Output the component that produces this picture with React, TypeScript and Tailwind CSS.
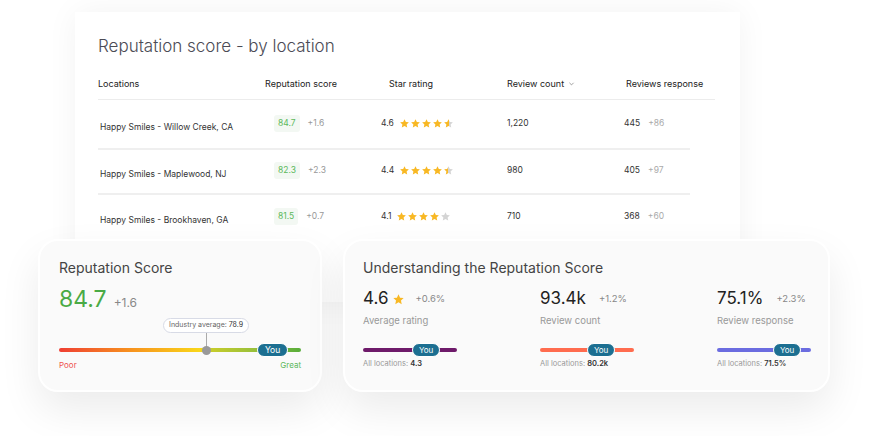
import React from 'react';

const font = { fontFamily: 'Inter, "Noto Sans", sans-serif' };

type Row = { name: string; score: string; delta: string; rating: string; fill: number; count: string; resp: string; respDelta: string };

const rows: Row[] = [
  { name: 'Happy Smiles - Willow Creek, CA', score: '84.7', delta: '+1.6', rating: '4.6', fill: 4.6, count: '1,220', resp: '445', respDelta: '+86' },
  { name: 'Happy Smiles - Maplewood, NJ', score: '82.3', delta: '+2.3', rating: '4.4', fill: 4.5, count: '980', resp: '405', respDelta: '+97' },
  { name: 'Happy Smiles - Brookhaven, GA', score: '81.5', delta: '+0.7', rating: '4.1', fill: 4.0, count: '710', resp: '368', respDelta: '+60' },
];

const STAR = 'M12 2.5l2.9 6.1 6.6.8-4.9 4.6 1.3 6.6L12 17.3l-5.9 3.3 1.3-6.6-4.9-4.6 6.6-.8z';

const Star = ({ part, id }: { part: number; id: string }) => (
  <svg viewBox="0 0 24 24" className="w-[11px] h-[11px]">
    <defs>
      <linearGradient id={id}>
        <stop offset={`${part * 100}%`} stopColor="#f8b824" />
        <stop offset={`${part * 100}%`} stopColor="#d4d4d4" />
      </linearGradient>
    </defs>
    <path d={STAR} fill={`url(#${id})`} />
  </svg>
);

const Stars = ({ value, k }: { value: number; k: number }) => (
  <div className="flex items-center">
    {[0, 1, 2, 3, 4].map((i) => (
      <Star key={i} id={`s${k}-${i}`} part={Math.max(0, Math.min(1, value - i))} />
    ))}
  </div>
);

const YouPill = () => (
  <span className="h-[14px] px-[6px] rounded-full bg-[#1c6f91] border border-white text-white text-[8px] leading-none flex items-center">You</span>
);

const Metric = ({ value, star, delta, label, color, pos, all, last }: { value: string; star?: boolean; delta: string; label: string; color: string; pos: number; all: string; last?: boolean }) => (
  <div className={last ? 'flex-1' : 'w-[177px] shrink-0'}>
    <div className="flex items-center h-[20px]">
      <span className="text-[17px] text-[#222]">{value}</span>
      {star && (
        <svg viewBox="0 0 24 24" className="w-[13px] h-[13px] ml-[4px]"><path d={STAR} fill="#f8b824" /></svg>
      )}
      <span className={`text-[9.5px] text-[#888] ${star ? 'ml-[10px]' : 'ml-[13px]'}`}>{delta}</span>
    </div>
    <div className="text-[9.5px] text-[#999] mt-[5px]">{label}</div>
    <div className="relative w-[94px] h-[14px] mt-[15px] flex items-center">
      <div className="w-full h-[4px] rounded-full" style={{ background: color }} />
      <div className="absolute top-0" style={{ left: pos }}><YouPill /></div>
    </div>
    <div className="text-[7.5px] text-[#999] mt-[1px]">All locations: <span className="text-[#333] font-semibold">{all}</span></div>
  </div>
);

export default function App() {
  return (
    <div className="w-[873px] h-[436px] bg-white overflow-hidden relative" style={font}>
      {/* Table card */}
      <div className="ml-[75px] mt-[12px] w-[665px] h-[290px] bg-white shadow-[0_0_30px_rgba(0,0,0,0.05)] pl-[23px] pr-[25px] pt-[22px]">
        <h1 className="text-[17px] font-light text-[#4b4b55] leading-[24px]">Reputation score - by location</h1>
        <div className="flex items-center h-[30px] mt-[12px] border-b border-[#ececec] text-[9px] text-[#222] pb-[2px]">
          <div className="w-[167px]">Locations</div>
          <div className="w-[124px]">Reputation score</div>
          <div className="w-[118px]">Star rating</div>
          <div className="w-[119px] flex items-center gap-[4px]">Review count
            <svg viewBox="0 0 10 10" className="w-[7px] h-[7px]"><path d="M2 4l3 3 3-3" stroke="#777" fill="none" strokeWidth="1" /></svg>
          </div>
          <div>Reviews response</div>
        </div>
        <div className="w-[592px]">
          {rows.map((r, i) => (
            <div key={r.name} className={`flex items-center text-[8.5px] text-[#333] ${i === 0 ? 'h-[50px]' : 'h-[45px]'} ${i < 2 ? 'border-b-2 border-[#efefef]' : ''}`}>
              <div className="w-[176px] pl-[2px] pt-[6px]">{r.name}</div>
              <div className="w-[107px] flex items-center gap-[8px] pb-[2px]">
                <span className="bg-[#f3f8f3] text-[#5cb85c] rounded-[3px] px-[4px] h-[17px] flex items-center">{r.score}</span>
                <span className="text-[#999]">{r.delta}</span>
              </div>
              <div className="w-[126px] flex items-center gap-[5px] pb-[2px]">
                <span>{r.rating}</span>
                <Stars value={r.fill} k={i} />
              </div>
              <div className="w-[117px] pb-[2px]">{r.count}</div>
              <div className="flex gap-[8px] pb-[2px]">
                <span>{r.resp}</span>
                <span className="text-[#aaa]">{r.respDelta}</span>
              </div>
            </div>
          ))}
        </div>
      </div>

      {/* Bottom cards */}
      <div className="flex gap-[21px] ml-[38px] -mt-[63px] relative">
        <div className="w-[284px] h-[153px] rounded-[20px] bg-[#fafafa] border-2 border-white shadow-[0_18px_40px_rgba(0,0,0,0.08)] px-[19px] pt-[17px]">
          <div className="text-[14px] text-[#444] leading-[20px]">Reputation Score</div>
          <div className="flex items-baseline gap-[7px] mt-[7px]">
            <span className="text-[23px] text-[#4aaa45] leading-[28px]">84.7</span>
            <span className="text-[12px] text-[#888]">+1.6</span>
          </div>
          <div className="relative h-[46px] mt-[2px]">
            <div className="absolute left-[104px] top-[3px] h-[15px] px-[5px] rounded-full bg-white border border-[#d8dbe6] text-[7px] text-[#666] flex items-center whitespace-nowrap">
              Industry average:&nbsp;<span className="text-[#333]">78.9</span>
            </div>
            <div className="absolute left-[147px] top-[18px] w-[1px] h-[15px] bg-[#aaa]" />
            <div className="absolute left-0 right-0 top-[33px] h-[4px] rounded-full" style={{ background: 'linear-gradient(90deg,#ef3e33 0%,#f7931e 30%,#f9d61a 58%,#c9cd2a 62%,#9bc13a 80%,#58ad3b 100%)' }} />
            <div className="absolute left-[143px] top-[31px] w-[9px] h-[9px] rounded-full bg-[#999]" />
            <div className="absolute left-[198px] top-[28px]">
              <span className="h-[14px] px-[7px] rounded-full bg-[#1c6f91] border border-white text-white text-[8.5px] leading-none flex items-center">You</span>
            </div>
          </div>
          <div className="flex justify-between text-[8px] -mt-[2px]">
            <span className="text-[#ef5350]">Poor</span>
            <span className="text-[#5cb85c]">Great</span>
          </div>
        </div>

        <div className="w-[487px] h-[153px] rounded-[20px] bg-[#fafafa] border-2 border-white shadow-[0_18px_40px_rgba(0,0,0,0.08)] px-[18px] pt-[17px]">
          <div className="text-[14px] text-[#444] leading-[20px]">Understanding the Reputation Score</div>
          <div className="flex mt-[11px]">
            <Metric value="4.6" star delta="+0.6%" label="Average rating" color="#6e1a6a" pos={49} all="4.3" />
            <Metric value="93.4k" delta="+1.2%" label="Review count" color="#ff6c4f" pos={47} all="80.2k" />
            <Metric value="75.1%" delta="+2.3%" label="Review response" color="#6b6ce0" pos={56} all="71.5%" last />
          </div>
        </div>
      </div>
    </div>
  );
}
